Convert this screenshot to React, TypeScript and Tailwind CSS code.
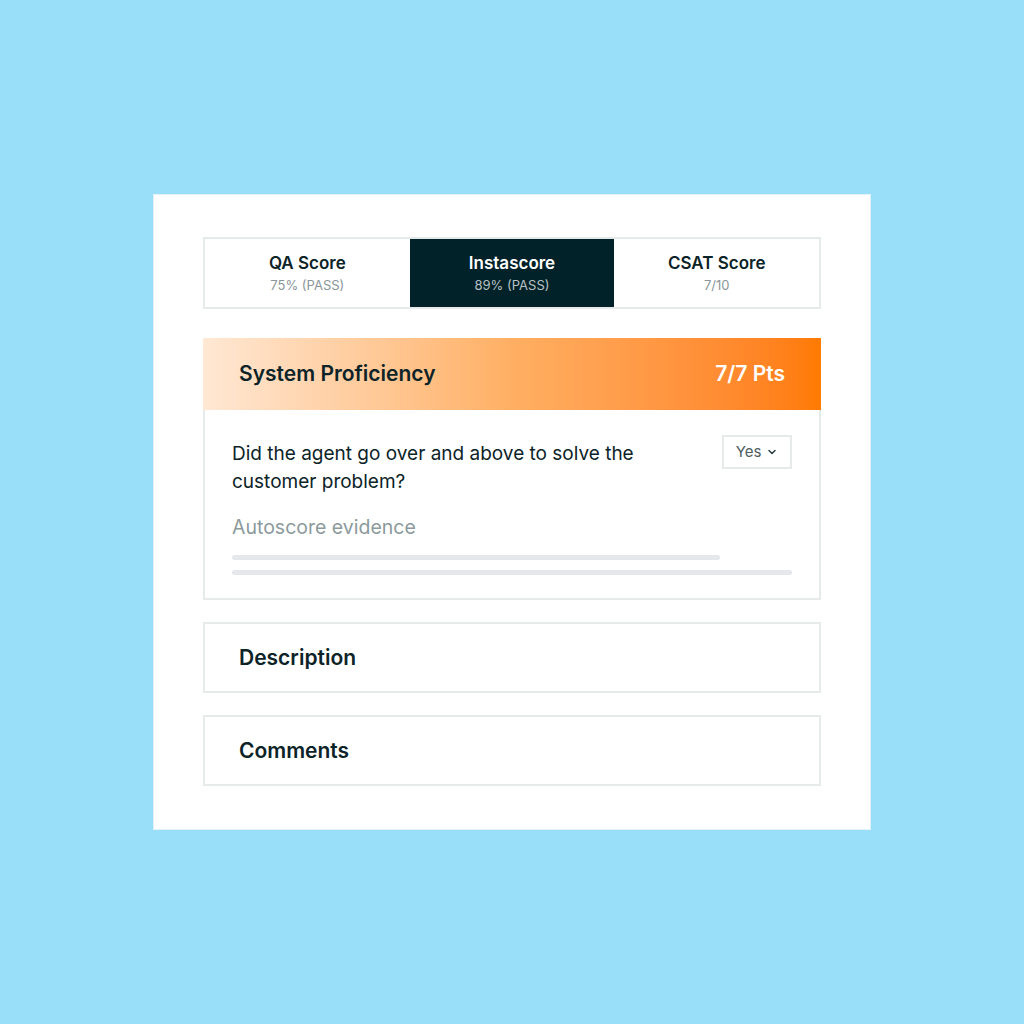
import { ChevronDown } from 'lucide-react'

const font = { fontFamily: 'Inter, "Noto Sans", sans-serif' }

function Tab({ title, sub, active }: { title: string; sub: string; active?: boolean }) {
  return (
    <div
      className={`flex-1 flex flex-col items-center justify-center h-full ${
        active ? 'bg-[#02222a]' : 'bg-white'
      }`}
    >
      <div className={`text-[17px] font-semibold leading-[22px] ${active ? 'text-white' : 'text-[#0c2328]'}`}>
        {title}
      </div>
      <div className={`text-[13px] leading-[18px] mt-[2px] ${active ? 'text-[#b7c1c3]' : 'text-[#8a9699]'}`}>{sub}</div>
    </div>
  )
}

function SectionBox({ label }: { label: string }) {
  return (
    <div className="h-[71px] border-2 border-[#e6eaea] flex items-center px-[34px]">
      <span className="text-[21px] font-semibold text-[#0c2328]">{label}</span>
    </div>
  )
}

export default function App() {
  return (
    <div className="w-[1024px] h-[1024px] bg-[#9adff9] flex items-center justify-center" style={font}>
      <div className="w-[718px] h-[636px] bg-white border border-[#e3f1f6] px-[49px] pt-[42px] flex flex-col">
        <div className="h-[72px] border-2 border-[#e6eaea] flex">
          <Tab title="QA Score" sub="75% (PASS)" />
          <Tab title="Instascore" sub="89% (PASS)" active />
          <Tab title="CSAT Score" sub="7/10" />
        </div>

        <div className="mt-[29px]">
          <div className="h-[72px] bg-gradient-to-r from-[#ffe8d4] via-[#ffaf62] to-[#ff7a00] flex items-center justify-between px-[36px]">
            <span className="text-[21px] font-semibold text-[#0c2328]">System Proficiency</span>
            <span className="text-[21px] font-semibold text-white">7/7 Pts</span>
          </div>
          <div className="h-[190px] border-2 border-t-0 border-[#e6eaea] px-[27px] pt-[30px]">
            <div className="flex justify-between items-start">
              <p className="text-[19px] leading-[28px] text-[#0c2328] w-[440px]">
                Did the agent go over and above to solve the customer problem?
              </p>
              <div className="w-[70px] h-[34px] border-2 border-[#e6eaea] flex items-center justify-center gap-[5px] mt-[-5px]">
                <span className="text-[15px] text-[#4d5e62]">Yes</span>
                <ChevronDown className="w-[12px] h-[12px] text-[#2c3e42]" strokeWidth={3} />
              </div>
            </div>
            <div className="text-[19.5px] leading-[28px] text-[#8c9a9c] mt-[17px]">Autoscore evidence</div>
            <div className="mt-[14px] h-[5px] w-[488px] rounded-full bg-[#e6e7eb]" />
            <div className="mt-[10px] h-[5px] w-full rounded-full bg-[#e6e7eb]" />
          </div>
        </div>

        <div className="mt-[22px] flex flex-col gap-[22px]">
          <SectionBox label="Description" />
          <SectionBox label="Comments" />
        </div>
      </div>
    </div>
  )
}
